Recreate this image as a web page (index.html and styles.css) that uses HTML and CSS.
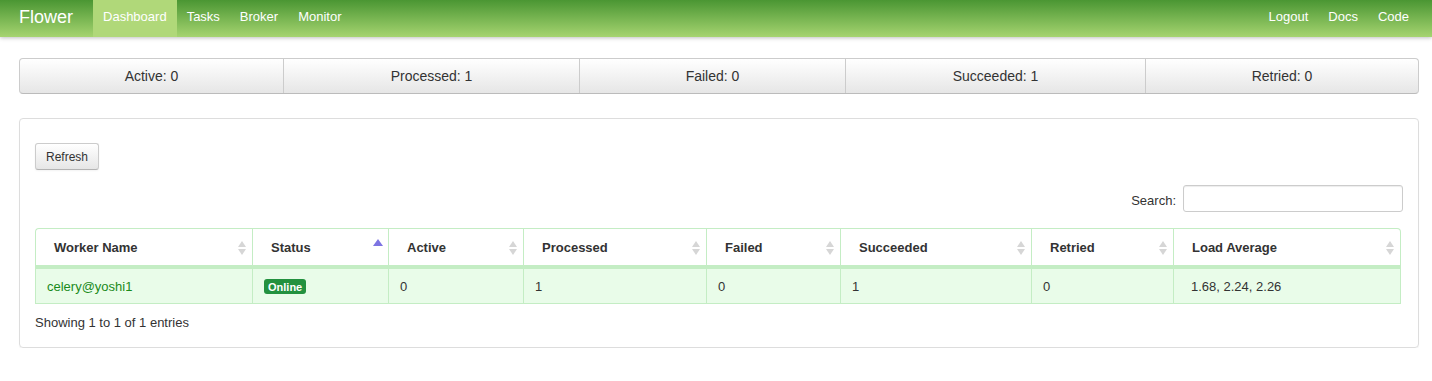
FILE: index.html
```html
<!DOCTYPE html>
<html lang="en">
<head>
    <meta charset="UTF-8">
    <title>Flower</title>
    <link rel="stylesheet" href="styles.css">
</head>
<body>
    <nav class="navbar">
        <div class="nav-left">
            <a class="brand" href="#">Flower</a>
            <a class="nav-item active" href="#">Dashboard</a>
            <a class="nav-item" href="#">Tasks</a>
            <a class="nav-item" href="#">Broker</a>
            <a class="nav-item" href="#">Monitor</a>
        </div>
        <div class="nav-right">
            <a class="nav-item" href="#">Logout</a>
            <a class="nav-item" href="#">Docs</a>
            <a class="nav-item" href="#">Code</a>
        </div>
    </nav>

    <div class="container">
        <div class="stats">
            <div class="stat s1">Active: 0</div>
            <div class="stat s2">Processed: 1</div>
            <div class="stat s3">Failed: 0</div>
            <div class="stat s4">Succeeded: 1</div>
            <div class="stat s5">Retried: 0</div>
        </div>

        <div class="panel">
            <button class="btn">Refresh</button>
            <div class="search-row">
                <label for="search">Search:</label>
                <input type="text" id="search">
            </div>
            <table class="workers">
                <colgroup>
                    <col style="width:217px"><col style="width:136px"><col style="width:135px"><col style="width:183px">
                    <col style="width:134px"><col style="width:191px"><col style="width:142px"><col style="width:228px">
                </colgroup>
                <thead>
                    <tr>
                        <th class="sortable">Worker Name</th>
                        <th class="sorted">Status</th>
                        <th class="sortable">Active</th>
                        <th class="sortable">Processed</th>
                        <th class="sortable">Failed</th>
                        <th class="sortable">Succeeded</th>
                        <th class="sortable">Retried</th>
                        <th class="sortable">Load Average</th>
                    </tr>
                </thead>
                <tbody>
                    <tr>
                        <td><a href="#" class="worker">celery@yoshi1</a></td>
                        <td><span class="badge">Online</span></td>
                        <td>0</td>
                        <td>1</td>
                        <td>0</td>
                        <td>1</td>
                        <td>0</td>
                        <td>1.68, 2.24, 2.26</td>
                    </tr>
                </tbody>
            </table>
            <div class="info">Showing 1 to 1 of 1 entries</div>
        </div>
    </div>
</body>
</html>
```

FILE: styles.css
```css
body, html {
    font-family: "Liberation Sans", Arial, sans-serif;
    font-size: 13px;
    color: #333;
    background-color: #fff;
    margin: 0;
    padding: 0;
}
a {
    text-decoration: none;
}
.navbar {
    display: flex;
    justify-content: space-between;
    height: 37px;
    padding: 0 13px 0 19px;
    background: linear-gradient(to bottom, #4a9633, #a6d470);
    box-shadow: 0 1px 4px rgba(0, 0, 0, 0.25);
}
.nav-left, .nav-right {
    display: flex;
    align-items: stretch;
}
.brand {
    color: #fff;
    font-size: 18px;
    font-weight: 300;
    line-height: 35px;
    margin-right: 20px;
}
.nav-item {
    color: #fff;
    padding: 0 10px;
    line-height: 34px;
}
.nav-item.active {
    background-color: #b0d879;
}
.container {
    padding: 21px 13px 0 19px;
}
.stats {
    display: flex;
    height: 34px;
    border: 1px solid #ccc;
    border-bottom-color: #bbb;
    border-radius: 4px;
    overflow: hidden;
    background: linear-gradient(to bottom, #fff, #e6e6e6);
}
.stat {
    display: flex;
    align-items: center;
    justify-content: center;
    font-size: 14px;
    color: #333;
    border-left: 1px solid #ccc;
}
.stat.s1 { width: 263px; border-left: none; }
.stat.s2 { width: 295px; }
.stat.s3 { width: 265px; }
.stat.s4 { width: 299px; }
.stat.s5 { flex: 1; }
.panel {
    margin-top: 24px;
    border: 1px solid #ddd;
    border-radius: 4px;
    padding: 24px 15px 17px 15px;
    box-shadow: 0 1px 1px rgba(0, 0, 0, 0.05);
}
.btn {
    font-family: "Liberation Sans", Arial, sans-serif;
    font-size: 12px;
    color: #333;
    height: 27px;
    padding: 0 10px;
    border: 1px solid #ccc;
    border-bottom-color: #b3b3b3;
    border-radius: 3px;
    background: linear-gradient(to bottom, #fff, #e6e6e6);
    box-shadow: 0 1px 2px rgba(0, 0, 0, 0.05);
}
.search-row {
    display: flex;
    justify-content: flex-end;
    align-items: center;
    margin-top: 15px;
}
.search-row label {
    margin-right: 7px;
    position: relative;
    top: 2px;
}
.search-row input {
    width: 206px;
    height: 25px;
    padding: 0 6px;
    border: 1px solid #ccc;
    border-radius: 3px;
    box-shadow: inset 0 1px 1px rgba(0, 0, 0, 0.075);
}
.workers {
    margin-top: 16px;
    width: 1366px;
    table-layout: fixed;
    border-collapse: separate;
    border-spacing: 0;
}
.workers th {
    position: relative;
    height: 36px;
    text-align: left;
    font-weight: bold;
    padding: 0 18px;
    border-top: 1px solid #c4edc4;
    border-left: 1px solid #c4edc4;
    border-bottom: 3px solid #c4edc4;
    background-color: #fff;
}
.workers th:first-child {
    border-top-left-radius: 4px;
}
.workers th:last-child {
    border-right: 1px solid #c4edc4;
    border-top-right-radius: 4px;
}
/* sort arrows: up triangle + down triangle */
.workers th.sortable::before,
.workers th.sortable::after {
    content: "";
    position: absolute;
    right: 6px;
    border-left: 4px solid transparent;
    border-right: 4px solid transparent;
}
.workers th.sortable::before {
    top: 12px;
    border-bottom: 6px solid #d6d6d6;
}
.workers th.sortable::after {
    top: 20px;
    border-top: 6px solid #d6d6d6;
}
.workers th.sorted::after {
    content: "";
    position: absolute;
    right: 5px;
    top: 10px;
    border-left: 5px solid transparent;
    border-right: 5px solid transparent;
    border-bottom: 7px solid #7d74e2;
}
.workers td {
    height: 34px;
    padding: 0 11px;
    background-color: #e9fce9;
    border-left: 1px solid #c4edc4;
    border-bottom: 1px solid #c4edc4;
    border-top: 1px solid #c4edc4;
    color: #333;
}
.workers td:last-child {
    border-right: 1px solid #c4edc4;
    padding-left: 17px;
}
.worker {
    color: #1a8a1a;
}
.badge {
    display: inline-block;
    background-color: #23913f;
    color: #fff;
    font-size: 11px;
    font-weight: bold;
    padding: 2px 4px 1px;
    border-radius: 3px;
}
.info {
    margin-top: 11px;
}
```
